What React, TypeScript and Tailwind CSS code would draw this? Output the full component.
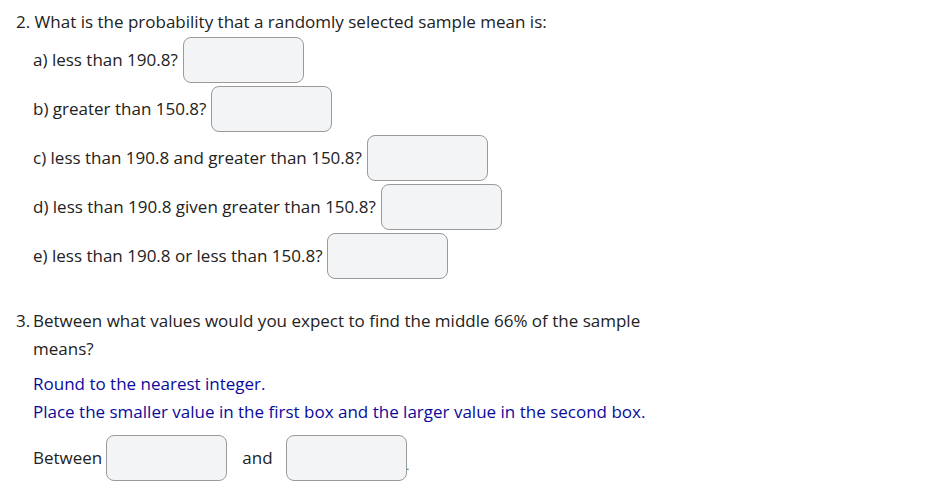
const parts = [
  { label: "a) less than 190.8?" },
  { label: "b) greater than 150.8?" },
  { label: "c) less than 190.8 and greater than 150.8?" },
  { label: "d) less than 190.8 given greater than 150.8?" },
  { label: "e) less than 190.8 or less than 150.8?" },
];

function AnswerBox() {
  return (
    <input
      type="text"
      className="h-[46px] w-[121px] shrink-0 rounded-[8px] border border-[#9a9a9a] bg-[#f3f4f6] outline-none"
    />
  );
}

export default function App() {
  return (
    <div className="min-h-screen bg-white px-4 pt-[10px] text-[17px] text-[#222] [font-family:'Open_Sans','Liberation_Sans',sans-serif]">
      <p className="leading-[24px]">2. What is the probability that a randomly selected sample mean is:</p>

      <div className="mt-[3px] flex flex-col gap-[3px] pl-[17px]">
        {parts.map((p) => (
          <div key={p.label} className="flex items-center gap-[5px]">
            <span>{p.label}</span>
            <AnswerBox />
          </div>
        ))}
      </div>

      <div className="mt-[28px] flex leading-[28px]">
        <span className="w-[17px] shrink-0">3.</span>
        <p className="max-w-[618px]">
          Between what values would you expect to find the middle 66% of the sample means?
        </p>
      </div>

      <div className="mt-[7px] pl-[17px] leading-[28px] text-[#0a0a9c]">
        <p>Round to the nearest integer.</p>
        <p>Place the smaller value in the first box and the larger value in the second box.</p>
      </div>

      <div className="mt-[9px] flex items-center pl-[17px]">
        <span className="mr-[4px]">Between</span>
        <AnswerBox />
        <span className="ml-[15px] mr-[13px]">and</span>
        <AnswerBox />
        <span className="self-end pb-[10px] text-[10px] leading-none">.</span>
      </div>
    </div>
  );
}
